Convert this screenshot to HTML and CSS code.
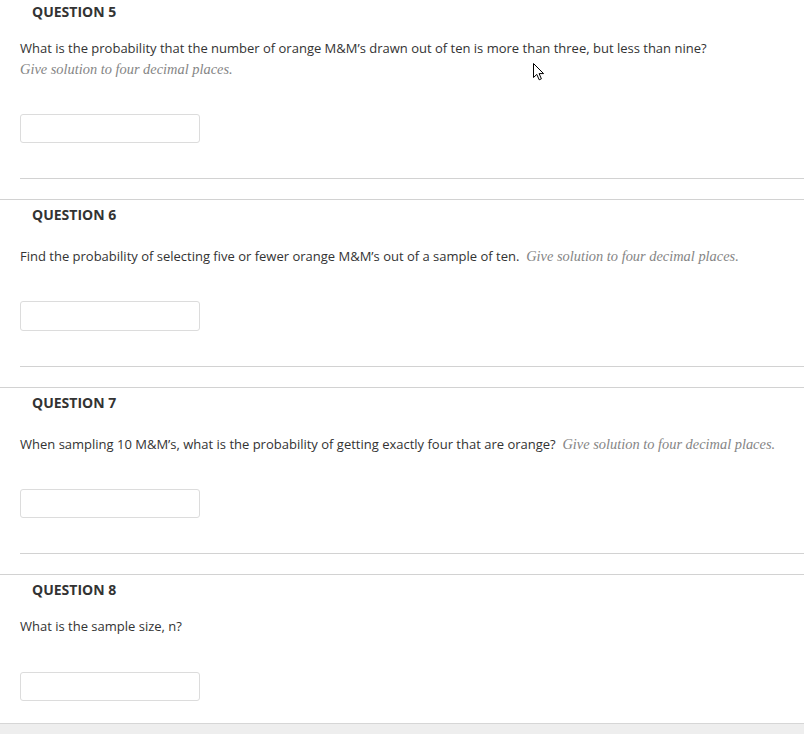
FILE: index.html
```html
<!DOCTYPE html>
<html>
<head>
<meta charset="utf-8">
<link rel="stylesheet" href="styles.css">
</head>
<body>
<main class="page">
  <section class="question question--first">
    <h2 class="question-head">QUESTION 5</h2>
    <div class="question-body">
      <p class="prompt prompt--tight prompt--wrapped">What is the probability that the number of orange M&amp;M’s drawn out of ten is more than three, but less than nine?<br><em class="hint">Give solution to four decimal places.</em></p>
      <div class="answer"></div>
      <hr class="divider">
    </div>
  </section>
  <section class="question">
    <h2 class="question-head">QUESTION 6</h2>
    <div class="question-body">
      <p class="prompt">Find the probability of selecting five or fewer orange M&amp;M’s out of a sample of ten.&nbsp; <em class="hint">Give solution to four decimal places.</em></p>
      <div class="answer answer--tall"></div>
      <hr class="divider">
    </div>
  </section>
  <section class="question">
    <h2 class="question-head">QUESTION 7</h2>
    <div class="question-body">
      <p class="prompt">When sampling 10 M&amp;M’s, what is the probability of getting exactly four that are orange?&nbsp; <em class="hint">Give solution to four decimal places.</em></p>
      <div class="answer"></div>
      <hr class="divider">
    </div>
  </section>
  <section class="question">
    <h2 class="question-head">QUESTION 8</h2>
    <div class="question-body">
      <p class="prompt prompt--tight">What is the sample size, n?</p>
      <div class="answer"></div>
    </div>
  </section>
  <footer class="footer-bar"></footer>
  <svg class="cursor" width="14" height="20" viewBox="0 0 14 20" aria-hidden="true">
    <path d="M1.5 1.5 L1.5 15.5 L4.8 12.4 L7.2 17.8 L9.4 16.8 L7.1 11.6 L11.6 11.6 Z" fill="#fff" stroke="#000" stroke-width="1" stroke-linejoin="miter"/>
  </svg>
</main>
</body>
</html>
```
FILE: styles.css
```css
html, body {
  margin: 0;
  padding: 0;
  background: #fff;
}
.page {
  position: relative;
  font-family: "Open Sans", "Liberation Sans", sans-serif;
  color: #333;
  overflow: hidden;
  height: 734px;
}
.question {
  border-top: 1px solid #d2d2d2;
}
.question--first {
  border-top: none;
  margin-top: -4px;
  padding-top: 1px;
}
.question-head {
  margin: 0;
  padding: 5px 0 0 32px;
  font-size: 14px;
  line-height: 20px;
  font-weight: 700;
  color: #333;
}
.question-body {
  padding-left: 20px;
}
.prompt {
  margin: 21px 0 0;
  font-size: 13px;
  line-height: 20px;
  color: #333;
}
.prompt--tight {
  margin-top: 16px;
  line-height: 21px;
}
.prompt--wrapped {
  line-height: 20.5px;
}
.hint {
  font-family: "Liberation Serif", "Times New Roman", serif;
  font-style: italic;
  font-size: 14.4px;
  line-height: 1;
  color: #858585;
}
.answer {
  margin-top: 35px;
  width: 180px;
  height: 29px;
  box-sizing: border-box;
  border: 1px solid #dcdcdc;
  border-radius: 3px;
  background: #fff;
}
.answer--tall {
  height: 30px;
}
.divider {
  margin: 35px 0 20px;
  border: none;
  border-top: 1px solid #d2d2d2;
  height: 0;
}
.footer-bar {
  margin-top: 22px;
  height: 20px;
  background: #eeeeee;
  border-top: 1px solid #d6d6d6;
}
.cursor {
  position: absolute;
  left: 532px;
  top: 62px;
}
```
